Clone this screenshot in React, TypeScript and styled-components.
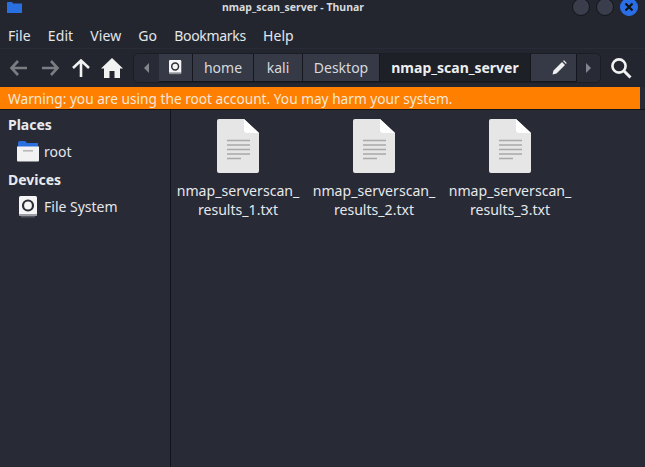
import React from "react";
import styled, { createGlobalStyle } from "styled-components";

const GlobalStyle = createGlobalStyle`
  html, body {
    margin: 0;
    padding: 0;
    background: #23262f;
  }
`;

const Window = styled.div`
  display: flex;
  flex-direction: column;
  width: 645px;
  height: 467px;
  overflow: hidden;
  background: #282a36;
  color: #e4e6ea;
  font-family: "Noto Sans", sans-serif;
  font-size: 14px;
`;

const TitleBar = styled.div`
  display: flex;
  align-items: flex-start;
  justify-content: space-between;
  height: 20px;
  flex-shrink: 0;
  padding: 0 7px;
  background: #23262f;
`;

const TitleIcon = styled.svg`
  margin-top: 2px;
  flex-shrink: 0;
`;

const Title = styled.div`
  flex: 1;
  text-align: center;
  font-size: 10.5px;
  line-height: 14px;
  font-weight: 700;
  color: #d8dade;
  padding-right: 8px;
`;

const WindowButtons = styled.div`
  display: flex;
  gap: 6px;
  margin-top: -2px;
`;

const WindowButton = styled.div<{ $active?: boolean }>`
  display: flex;
  align-items: center;
  justify-content: center;
  width: 18px;
  height: 18px;
  box-sizing: border-box;
  border-radius: 50%;
  background: ${({ $active }) => ($active ? "#2a6fe8" : "#3a3d4b")};
  border: 1px solid ${({ $active }) => ($active ? "#2a6fe8" : "#14151b")};
`;

const MenuBar = styled.div`
  display: flex;
  align-items: center;
  gap: 17px;
  height: 29px;
  flex-shrink: 0;
  padding: 2px 8px 0;
  background: #23262f;
  border-bottom: 1px solid #292c36;
  box-sizing: border-box;
`;

const MenuItem = styled.span<{ $tight?: boolean }>`
  letter-spacing: ${({ $tight }) => ($tight ? "-0.3px" : "0.1px")};
`;

const ToolBar = styled.div`
  display: flex;
  align-items: center;
  height: 38px;
  flex-shrink: 0;
  padding: 0 0 0 3px;
  background: #23262f;
  box-sizing: border-box;
`;

const NavButton = styled.div`
  display: flex;
  align-items: center;
  justify-content: center;
  width: 31px;
  height: 24px;
`;

const PathBar = styled.div`
  display: flex;
  align-items: stretch;
  height: 30px;
  width: 468px;
  margin-left: 6px;
  box-sizing: border-box;
  border: 1px solid #1b1d25;
  border-radius: 5px;
  background: #282a36;
  overflow: hidden;
`;

const PathArrow = styled.div<{ $width?: number }>`
  display: flex;
  align-items: center;
  justify-content: center;
  flex: ${({ $width }) => ($width ? `0 0 ${$width}px` : "1")};
`;

const Crumb = styled.div<{ $current?: boolean; $width: number }>`
  display: flex;
  align-items: center;
  justify-content: center;
  width: ${({ $width }) => $width}px;
  flex-shrink: 0;
  box-sizing: border-box;
  background: ${({ $current }) => ($current ? "#1e2028" : "#363946")};
  border-right: 1px solid #16171e;
  border-bottom: 1px solid #16171e;
  font-weight: ${({ $current }) => ($current ? 700 : 400)};
  font-size: 14px;
  color: ${({ $current }) => ($current ? "#eceef0" : "#d6d9de")};
`;

const SearchButton = styled.div`
  display: flex;
  align-items: center;
  justify-content: center;
  width: 40px;
  height: 30px;
`;

const Warning = styled.div`
  display: flex;
  align-items: center;
  height: 22px;
  flex-shrink: 0;
  width: 640px;
  padding-left: 8px;
  box-sizing: border-box;
  background: #ff7f00;
  color: #f5e8d8;
  font-size: 13.7px;
`;

const Main = styled.div`
  display: flex;
  flex: 1;
  min-height: 0;
  border-top: 1px solid #14151b;
`;

const SideBar = styled.div`
  display: flex;
  flex-direction: column;
  width: 171px;
  flex-shrink: 0;
  box-sizing: border-box;
  padding-top: 2px;
  border-right: 1px solid #14151b;
`;

const SideHeading = styled.div`
  display: flex;
  align-items: center;
  height: 24px;
  padding-left: 8px;
  font-weight: 700;
  color: #e8eaed;
`;

const SideRow = styled.div`
  display: flex;
  align-items: center;
  gap: 5px;
  height: 31px;
  padding-left: 17px;
`;

const IconSlot = styled.div`
  display: flex;
  align-items: center;
  justify-content: center;
  width: 22px;
  height: 24px;
`;

const Files = styled.div`
  display: flex;
  align-items: flex-start;
  flex: 1;
  padding: 9px 0 0 0;
  margin-left: -1px;
`;

const FileItem = styled.div`
  display: flex;
  flex-direction: column;
  align-items: center;
  width: 136px;
  flex-shrink: 0;
`;

const FileName = styled.div`
  margin-top: 8px;
  text-align: center;
  line-height: 19px;
  color: #e6e8eb;
  font-size: 14.1px;
`;

const ArrowLeft = ({ color }: { color: string }) => (
  <svg width="20" height="18" viewBox="0 0 20 18">
    <path d="M9 2 L2.5 9 L9 16 M3 9 H18" fill="none" stroke={color} strokeWidth="2.6" />
  </svg>
);

const ArrowRight = ({ color }: { color: string }) => (
  <svg width="20" height="18" viewBox="0 0 20 18">
    <path d="M11 2 L17.5 9 L11 16 M17 9 H2" fill="none" stroke={color} strokeWidth="2.6" />
  </svg>
);

const ArrowUp = () => (
  <svg width="20" height="20" viewBox="0 0 20 20">
    <path d="M2 10 L10 2.5 L18 10 M10 3 V19" fill="none" stroke="#f2f2f2" strokeWidth="2.6" />
  </svg>
);

const HomeIcon = () => (
  <svg width="24" height="22" viewBox="0 0 24 22">
    <path d="M12 1 L23 11.5 H20 V21 H14.5 V14 H9.5 V21 H4 V11.5 H1 Z" fill="#f2f2f2" />
  </svg>
);

const DiskIcon = ({ height }: { height: number }) => (
  <svg width={(height * 18) / 22} height={height} viewBox="0 0 18 22">
    <rect x="0" y="0" width="18" height="20" rx="1.5" fill="#f5f5f5" />
    <circle cx="9" cy="9.5" r="5" fill="none" stroke="#2c2e38" strokeWidth="2.2" />
    <rect x="0" y="18" width="18" height="2" fill="#9a9ca3" />
    <rect x="2" y="20" width="14" height="1.5" fill="#55575f" />
  </svg>
);

const FolderIcon = () => (
  <svg width="22" height="21" viewBox="0 0 22 21">
    <path d="M1 2 Q1 0 3 0 H8 L10 2 H21 V8 H1 Z" fill="#2a6fdc" />
    <path d="M0 5.5 H22 V19 Q22 20.5 21 20.5 H1 Q0 20.5 0 19 Z" fill="#f2f2f2" />
    <rect x="6" y="9" width="10" height="1.6" fill="#b8b8b8" />
  </svg>
);

const FileIcon = () => (
  <svg width="42" height="54" viewBox="0 0 42 54">
    <path d="M2 0 H27 L42 14 V52 Q42 54 40 54 H2 Q0 54 0 52 V2 Q0 0 2 0 Z" fill="#e6e6e6" />
    <path d="M27 0 L42 14 H30 Q27 14 27 11 Z" fill="#ffffff" />
    <path d="M10 21.5 H33 M10 26 H33 M10 30.5 H33 M10 35 H33 M10 39.5 H24" stroke="#a9a9a9" strokeWidth="1.3" />
  </svg>
);

const crumbs = [
  { label: "home", width: 61 },
  { label: "kali", width: 49 },
  { label: "Desktop", width: 77 },
];

const files = ["nmap_serverscan_\u200Bresults_1.txt", "nmap_serverscan_\u200Bresults_2.txt", "nmap_serverscan_\u200Bresults_3.txt"];

export default function App() {
  return (
    <Window>
      <GlobalStyle />
      <TitleBar>
        <TitleIcon width="15" height="11" viewBox="0 0 15 11">
          <path d="M0 1 Q0 0 1 0 H5 L6 1.5 H15 V11 H0 Z" fill="#2a6fe0" />
        </TitleIcon>
        <Title>nmap_scan_server - Thunar</Title>
        <WindowButtons>
          <WindowButton />
          <WindowButton />
          <WindowButton $active>
            <svg width="10" height="10" viewBox="0 0 10 10">
              <path d="M1.5 1.5 L8.5 8.5 M8.5 1.5 L1.5 8.5" stroke="#111" strokeWidth="2.2" />
            </svg>
          </WindowButton>
        </WindowButtons>
      </TitleBar>
      <MenuBar>
        <MenuItem>File</MenuItem>
        <MenuItem>Edit</MenuItem>
        <MenuItem>View</MenuItem>
        <MenuItem>Go</MenuItem>
        <MenuItem $tight>Bookmarks</MenuItem>
        <MenuItem>Help</MenuItem>
      </MenuBar>
      <ToolBar>
        <NavButton><ArrowLeft color="#7b7d83" /></NavButton>
        <NavButton><ArrowRight color="#7b7d83" /></NavButton>
        <NavButton><ArrowUp /></NavButton>
        <NavButton><HomeIcon /></NavButton>
        <PathBar>
          <PathArrow $width={25}>
            <svg width="6" height="10" viewBox="0 0 6 10"><path d="M5 0 V10 L0 5 Z" fill="#83858c" /></svg>
          </PathArrow>
          <Crumb $width={34}><DiskIcon height={15} /></Crumb>
          {crumbs.map((crumb) => (
            <Crumb key={crumb.label} $width={crumb.width}>{crumb.label}</Crumb>
          ))}
          <Crumb $current $width={151}>nmap_scan_server</Crumb>
          <Crumb $width={46}>
            <svg width="15" height="15" viewBox="0 0 15 15" style={{ marginLeft: 12 }}>
              <path d="M0.5 14.5 L1.5 10.5 L10 2 L13 5 L4.5 13.5 Z M11 1 L12 0.3 L14.7 3 L14 4 Z" fill="#f0f0f0" />
            </svg>
          </Crumb>
          <PathArrow>
            <svg width="6" height="10" viewBox="0 0 6 10"><path d="M0 0 V10 L5 5 Z" fill="#83858c" /></svg>
          </PathArrow>
        </PathBar>
        <SearchButton>
          <svg width="22" height="22" viewBox="0 0 22 22">
            <circle cx="9" cy="9" r="6.6" fill="none" stroke="#f2f2f2" strokeWidth="2.6" />
            <path d="M14 14 L20.5 20.5" stroke="#f2f2f2" strokeWidth="3" />
          </svg>
        </SearchButton>
      </ToolBar>
      <Warning>Warning: you are using the root account. You may harm your system.</Warning>
      <Main>
        <SideBar>
          <SideHeading>Places</SideHeading>
          <SideRow>
            <IconSlot><FolderIcon /></IconSlot>
            <span>root</span>
          </SideRow>
          <SideHeading>Devices</SideHeading>
          <SideRow>
            <IconSlot><DiskIcon height={22} /></IconSlot>
            <span>File System</span>
          </SideRow>
        </SideBar>
        <Files>
          {files.map((name) => (
            <FileItem key={name}>
              <FileIcon />
              <FileName>{name}</FileName>
            </FileItem>
          ))}
        </Files>
      </Main>
    </Window>
  );
}
